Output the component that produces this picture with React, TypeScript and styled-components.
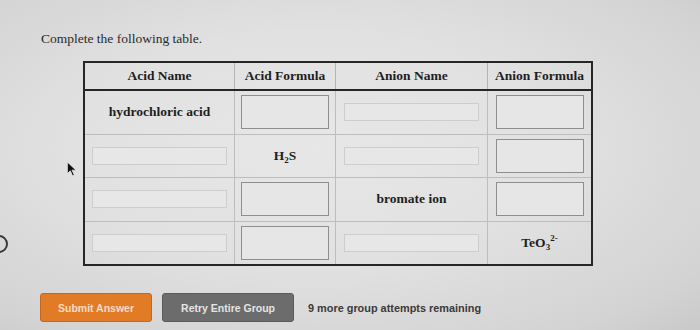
import styled, { createGlobalStyle } from "styled-components";

const GlobalStyle = createGlobalStyle`
  html, body {
    margin: 0;
    padding: 0;
  }
  body {
    width: 700px;
    height: 330px;
    overflow: hidden;
    background: radial-gradient(ellipse at 45% 45%, #e7e7e7 0%, #e1e1e1 45%, #d3d3d3 85%, #c9c9c9 100%);
  }
`;

const Page = styled.div`
  position: relative;
  width: 700px;
  height: 330px;
  padding: 31px 0 0 41px;
  box-sizing: border-box;
`;

const Prompt = styled.p`
  margin: 0 0 14px;
  font-family: "Liberation Serif", "Times New Roman", serif;
  font-size: 13.5px;
  color: #2a2a2a;
`;

const Table = styled.table`
  margin-left: 42px;
  border-collapse: collapse;
  border: 2px solid #262626;
  font-family: "Liberation Serif", "Times New Roman", serif;
  font-weight: bold;
  font-size: 13.5px;
  color: #1e1e1e;
`;

const HeadCell = styled.th<{ $w: number }>`
  width: ${(p) => p.$w}px;
  height: 26px;
  padding: 0;
  border-left: 1px solid #b4b4b4;
  border-bottom: 2px solid #262626;
  text-align: center;
  vertical-align: middle;
`;

const Cell = styled.td`
  height: 42.5px;
  padding: 0;
  border: 1px solid #bdbdbd;
  text-align: center;
  vertical-align: middle;
`;

const NameBox = styled.div`
  width: 133px;
  height: 16px;
  margin: 0 auto;
  border: 1px solid #cdcdcd;
  background: #e7e7e7;
`;

const FormulaBox = styled.div`
  width: 86px;
  height: 32px;
  margin: 0 auto;
  border: 1px solid #8e8e8e;
  background: #e6e6e6;
`;

const Sub = styled.sub`
  font-size: 9px;
  vertical-align: -3px;
  line-height: 0;
`;

const Sup = styled.sup`
  font-size: 9px;
  vertical-align: 6px;
  line-height: 0;
`;

const Actions = styled.div`
  display: flex;
  align-items: center;
  gap: 10px;
  margin-top: 27px;
  margin-left: -1px;
  font-family: "Liberation Sans", Arial, sans-serif;
`;

const Button = styled.button<{ $tone: "orange" | "gray" }>`
  height: 29px;
  padding: 0 ${(p) => (p.$tone === "orange" ? 17 : 18)}px;
  border: 1px solid ${(p) => (p.$tone === "orange" ? "#c8661c" : "#5a5a5a")};
  border-radius: 3px;
  background: ${(p) => (p.$tone === "orange" ? "#e27b25" : "#6c6c6c")};
  color: ${(p) => (p.$tone === "orange" ? "#f6dcc6" : "#e4e4e4")};
  font-family: "Liberation Sans", Arial, sans-serif;
  font-weight: bold;
  font-size: 10.5px;
`;

const Remaining = styled.span`
  margin-left: 4px;
  font-size: 10.9px;
  font-weight: bold;
  color: #3a3a3a;
`;

const Pointer = styled.svg`
  position: absolute;
  left: 66px;
  top: 161px;
`;

const EdgeRing = styled.div`
  position: absolute;
  left: -10px;
  top: 235px;
  width: 14px;
  height: 14px;
  border: 2px solid #3a3a3a;
  border-radius: 50%;
`;

const widths = [149, 100, 151, 103];
const heads = ["Acid Name", "Acid Formula", "Anion Name", "Anion Formula"];

export default function App() {
  return (
    <Page>
      <GlobalStyle />
      <Prompt>Complete the following table.</Prompt>
      <Table>
        <thead>
          <tr>
            {heads.map((h, i) => (
              <HeadCell key={h} $w={widths[i]}>
                {h}
              </HeadCell>
            ))}
          </tr>
        </thead>
        <tbody>
          <tr>
            <Cell>hydrochloric acid</Cell>
            <Cell><FormulaBox /></Cell>
            <Cell><NameBox /></Cell>
            <Cell><FormulaBox /></Cell>
          </tr>
          <tr>
            <Cell><NameBox /></Cell>
            <Cell>H<Sub>2</Sub>S</Cell>
            <Cell><NameBox /></Cell>
            <Cell><FormulaBox /></Cell>
          </tr>
          <tr>
            <Cell><NameBox /></Cell>
            <Cell><FormulaBox /></Cell>
            <Cell>bromate ion</Cell>
            <Cell><FormulaBox /></Cell>
          </tr>
          <tr>
            <Cell><NameBox /></Cell>
            <Cell><FormulaBox /></Cell>
            <Cell><NameBox /></Cell>
            <Cell>TeO<Sub>3</Sub><Sup>2-</Sup></Cell>
          </tr>
        </tbody>
      </Table>
      <Actions>
        <Button $tone="orange">Submit Answer</Button>
        <Button $tone="gray">Retry Entire Group</Button>
        <Remaining>9 more group attempts remaining</Remaining>
      </Actions>
      <Pointer width="12" height="16" viewBox="0 0 10 14">
        <path d="M1 1 L1 11 L3.5 8.5 L5.5 13 L7 12.3 L5 8 L8.5 8 Z" fill="#111" stroke="#eee" strokeWidth="0.6" />
      </Pointer>
      <EdgeRing />
    </Page>
  );
}
